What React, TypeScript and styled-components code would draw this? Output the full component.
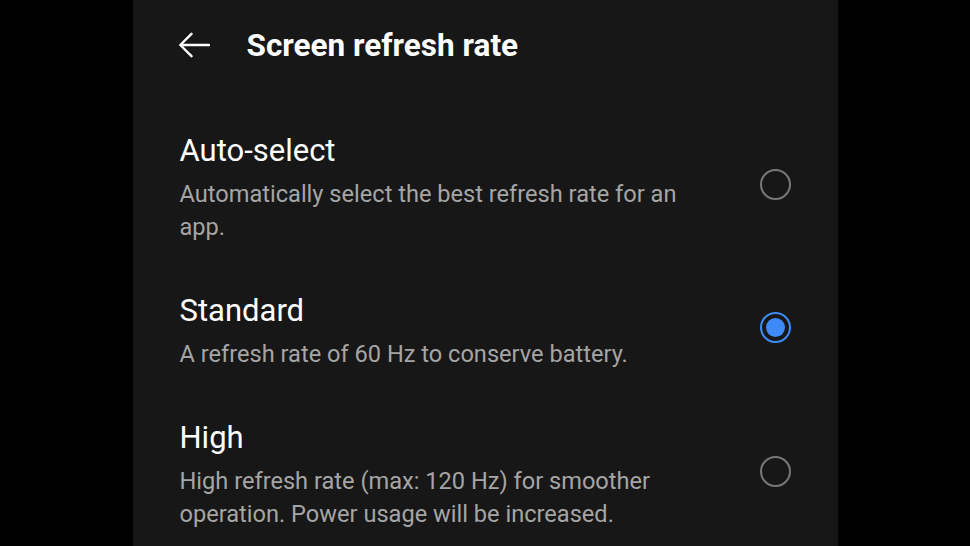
import styled, { createGlobalStyle } from 'styled-components';

interface RateOption {
  id: string;
  title: string;
  description: string;
}

const OPTIONS: RateOption[] = [
  {
    id: 'auto',
    title: 'Auto-select',
    description: 'Automatically select the best refresh rate for an app.',
  },
  {
    id: 'standard',
    title: 'Standard',
    description: 'A refresh rate of 60 Hz to conserve battery.',
  },
  {
    id: 'high',
    title: 'High',
    description: 'High refresh rate (max: 120 Hz) for smoother operation. Power usage will be increased.',
  },
];

const selected = 'standard';

export default function App() {
  return (
    <>
      <GlobalStyle />
      <Stage>
        <Panel>
          <Header>
            <BackButton aria-label='Back'>
              <svg width='32' height='26' viewBox='0 0 32 26' fill='none'>
                <path
                  d='M31 13H2.5M13.5 1.8L2.3 13l11.2 11.2'
                  stroke='#ffffff'
                  strokeWidth='2.4'
                  strokeLinecap='round'
                  strokeLinejoin='round'
                />
              </svg>
            </BackButton>
            <HeaderTitle>Screen refresh rate</HeaderTitle>
          </Header>

          <OptionList>
            {OPTIONS.map((option) => (
              <OptionRow key={option.id}>
                <OptionText>
                  <OptionTitle>{option.title}</OptionTitle>
                  <OptionDescription>{option.description}</OptionDescription>
                </OptionText>
                <Radio checked={option.id === selected} />
              </OptionRow>
            ))}
          </OptionList>
        </Panel>
      </Stage>
    </>
  );
}

const GlobalStyle = createGlobalStyle`
  html, body {
    margin: 0;
    padding: 0;
    background: #000000;
  }
  body {
    font-family: Roboto, 'Noto Sans', sans-serif;
  }
`;

const Stage = styled.div`
  display: flex;
  justify-content: center;
  width: 970px;
  height: 546px;
  overflow: hidden;
  background: #000000;
`;

const Panel = styled.div`
  width: 705px;
  height: 100%;
  background: #171717;
  display: flex;
  flex-direction: column;
`;

const Header = styled.div`
  display: flex;
  align-items: center;
  height: 90px;
  padding-left: 45px;
  gap: 37px;
`;

const BackButton = styled.div`
  display: flex;
  width: 32px;
  height: 26px;
`;

const HeaderTitle = styled.h1`
  margin: 0;
  font-size: 31.5px;
  font-weight: 700;
  color: #ffffff;
`;

const OptionList = styled.div`
  display: flex;
  flex-direction: column;
  gap: 48px;
  padding-top: 42px;
`;

const OptionRow = styled.div`
  display: flex;
  align-items: center;
  gap: 60px;
  padding: 0 47px 0 47px;
`;

const OptionText = styled.div`
  flex: 1;
  display: flex;
  flex-direction: column;
  gap: 8px;
`;

const OptionTitle = styled.div`
  font-size: 31px;
  line-height: 38px;
  color: #ffffff;
`;

const OptionDescription = styled.div`
  font-size: 23.6px;
  line-height: 33px;
  color: #a5a5a5;
`;

const Radio = styled.div<{ checked: boolean }>`
  flex: none;
  box-sizing: border-box;
  width: 31px;
  height: 31px;
  margin-bottom: 8px;
  border-radius: 50%;
  border: ${(p) => (p.checked ? '2.5px solid #3e8bf8' : '2.5px solid #787878')};
  display: flex;
  align-items: center;
  justify-content: center;

  &::after {
    content: '';
    display: ${(p) => (p.checked ? 'block' : 'none')};
    width: 19px;
    height: 19px;
    border-radius: 50%;
    background: #3e8bf8;
  }
`;
